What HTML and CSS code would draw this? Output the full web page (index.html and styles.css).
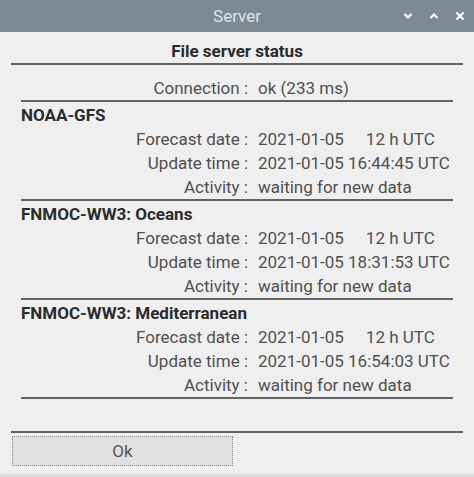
FILE: index.html
```html
<!DOCTYPE html>
<html>
<head>
<meta charset="utf-8">
<link rel="stylesheet" href="styles.css">
</head>
<body>
<div class="window">
  <div class="titlebar">
    <span class="title">Server</span>
    <div class="controls">
      <svg class="ctl" viewBox="0 0 10 10" width="10" height="10"><path d="M1.5 3 L5 6.5 L8.5 3" fill="none" stroke="#fff" stroke-width="2.2"/></svg>
      <svg class="ctl" viewBox="0 0 10 10" width="10" height="10"><path d="M1.5 7 L5 3.5 L8.5 7" fill="none" stroke="#fff" stroke-width="2.2"/></svg>
      <svg class="ctl" viewBox="0 0 10 10" width="10" height="10"><path d="M1.5 1.5 L8.5 8.5 M8.5 1.5 L1.5 8.5" fill="none" stroke="#fff" stroke-width="2.2"/></svg>
    </div>
  </div>
  <div class="main">
    <div class="heading">File server status</div>
    <div class="inner">
      <div class="conn grid">
        <div class="lbl">Connection :</div><div class="val">ok (233 ms)</div>
      </div>
      <div class="section">
        <div class="sec-title">NOAA-GFS</div>
        <div class="grid">
          <div class="lbl">Forecast date :</div><div class="val">2021-01-05<span class="hour">12 h UTC</span></div>
          <div class="lbl">Update time :</div><div class="val">2021-01-05 16:44:45 UTC</div>
          <div class="lbl">Activity :</div><div class="val">waiting for new data</div>
        </div>
      </div>
      <div class="section">
        <div class="sec-title">FNMOC-WW3: Oceans</div>
        <div class="grid">
          <div class="lbl">Forecast date :</div><div class="val">2021-01-05<span class="hour">12 h UTC</span></div>
          <div class="lbl">Update time :</div><div class="val">2021-01-05 18:31:53 UTC</div>
          <div class="lbl">Activity :</div><div class="val">waiting for new data</div>
        </div>
      </div>
      <div class="section">
        <div class="sec-title">FNMOC-WW3: Mediterranean</div>
        <div class="grid">
          <div class="lbl">Forecast date :</div><div class="val">2021-01-05<span class="hour">12 h UTC</span></div>
          <div class="lbl">Update time :</div><div class="val">2021-01-05 16:54:03 UTC</div>
          <div class="lbl">Activity :</div><div class="val">waiting for new data</div>
        </div>
      </div>
    </div>
    <div class="footer">
      <button class="ok">Ok</button>
    </div>
  </div>
  <div class="bottom"></div>
</div>
</body>
</html>
```
FILE: styles.css
```css
html, body {
  margin: 0;
  padding: 0;
}
body {
  width: 474px;
  height: 477px;
  overflow: hidden;
  background: #efefef;
  font-family: Roboto, "Liberation Sans", sans-serif;
  font-size: 17px;
  color: #505050;
}
.window {
  display: flex;
  flex-direction: column;
  height: 477px;
}
.titlebar {
  height: 32px;
  background: #7e8a93;
  display: flex;
  align-items: center;
  justify-content: center;
  position: relative;
}
.title {
  color: #dfe3e6;
  font-size: 17px;
}
.controls {
  position: absolute;
  right: 9px;
  top: 11px;
  display: flex;
  gap: 16px;
}
.ctl {
  display: block;
}
.main {
  flex: 1;
  display: flex;
  flex-direction: column;
  padding: 0 11px;
}
.heading {
  padding-top: 7px;
  line-height: 24px;
  text-align: center;
  font-weight: bold;
  color: #2b2b2b;
  border-bottom: 2px solid #626262;
}
.inner {
  margin: 0 10px;
}
.grid {
  display: grid;
  grid-template-columns: 227px 1fr;
  column-gap: 10px;
  line-height: 24px;
}
.lbl {
  text-align: right;
  white-space: nowrap;
}
.val {
  white-space: nowrap;
}
.hour {
  margin-left: 22px;
}
.conn {
  margin-top: 11px;
  border-bottom: 2px solid #626262;
}
.section {
  padding-top: 1px;
  border-bottom: 2px solid #626262;
}
.sec-title {
  line-height: 24px;
  font-weight: bold;
  color: #2b2b2b;
}
.footer {
  margin-top: auto;
  margin-bottom: 8px;
  border-top: 2px solid #626262;
  padding-top: 3px;
}
.ok {
  display: block;
  margin-left: 1px;
  width: 221px;
  height: 30px;
  background: #e0e0e0;
  border: 1px dotted #8a8a8a;
  font-family: Roboto, "Liberation Sans", sans-serif;
  font-size: 17px;
  color: #555;
  padding: 0;
}
.bottom {
  height: 3px;
  background: #dcdcdc;
}
```
